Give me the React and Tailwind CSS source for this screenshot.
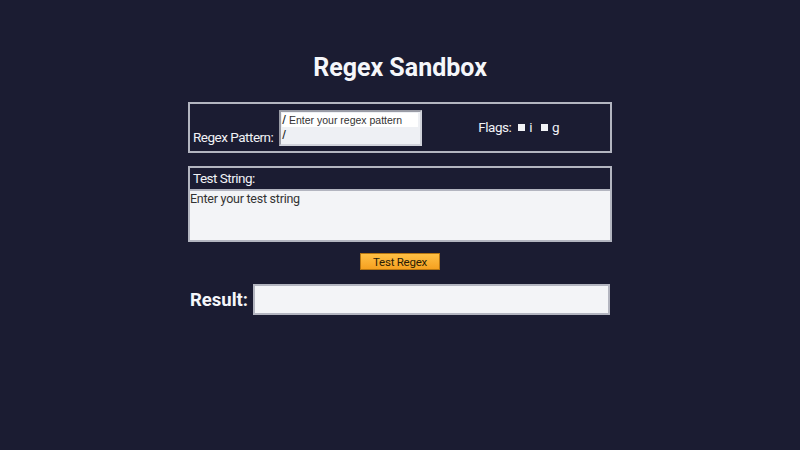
export default function App() {
  return (
    <div className="min-h-[450px] w-full bg-[#1b1c32] text-[#f1f2f6]" style={{ fontFamily: "Roboto, 'Liberation Sans', sans-serif" }}>
      <div className="mx-auto w-[424px] pt-[51px]">
        <h1 className="text-center text-[25px] font-bold leading-[34px] text-[#f5f6fa]">Regex Sandbox</h1>

        {/* pattern + flags */}
        <div className="mt-[17px] flex h-[51px] items-stretch border-2 border-[#b3b5c0] pl-[3px] pt-[6px] pb-[5px]">
          <span className="self-end pb-[1px] text-[13.5px] leading-[16px] tracking-[-0.5px]">Regex Pattern:</span>
          <div className="ml-[6px] flex w-[143px] flex-col border-2 border-t-[#9a9ca6] border-l-[#9a9ca6] border-r-[#d0d2da] border-b-[#d0d2da] bg-[#eef0f4] text-[#222] pl-[1px]" style={{ fontFamily: "'Liberation Sans', Arial, sans-serif" }}>
            <div className="mt-[1px] flex h-[14px] w-[136px] items-center bg-white text-[10.5px] leading-[14px]">
              <span className="text-[13px]">/</span>
              <span className="ml-[3px] text-[#333]">Enter your regex pattern</span>
            </div>
            <span className="text-[13px] leading-[16px]">/</span>
          </div>
          <div className="ml-[56px] flex items-center self-center pb-[2px] text-[13.5px] tracking-[-0.5px]">
            <span>Flags:</span>
            <span className="ml-[7px] inline-block h-[7px] w-[7px] bg-[#f1f2f6]" />
            <span className="ml-[4px]">i</span>
            <span className="ml-[9px] inline-block h-[7px] w-[7px] bg-[#f1f2f6]" />
            <span className="ml-[4px]">g</span>
          </div>
        </div>

        {/* test string */}
        <div className="mt-[13px] flex flex-col border-2 border-[#b3b5c0]">
          <div className="h-[21px] pl-[3px] text-[13.5px] leading-[21px] tracking-[-0.5px]">Test String:</div>
          <div className="h-[51px] border-t-2 border-[#b3b5c0] bg-[#f3f4f7] text-[12.5px] leading-[16px] tracking-[-0.25px] text-[#333]">
            Enter your test string
          </div>
        </div>

        {/* action */}
        <div className="mt-[11px] flex justify-center">
          <button className="h-[17px] w-[80px] border border-[#b77611] bg-gradient-to-b from-[#ffc043] to-[#f5a11f] text-[11.5px] leading-[14px] tracking-[-0.25px] text-[#2a1c05]">
            Test Regex
          </button>
        </div>

        {/* result */}
        <div className="mt-[14px] flex items-center">
          <span className="ml-[2px] text-[18.5px] font-bold leading-[22px] text-[#f5f6fa]">Result:</span>
          <div className="ml-[5px] h-[31px] w-[357px] border-2 border-[#b3b5c0] bg-[#f3f4f7]" />
        </div>
      </div>
    </div>
  );
}
